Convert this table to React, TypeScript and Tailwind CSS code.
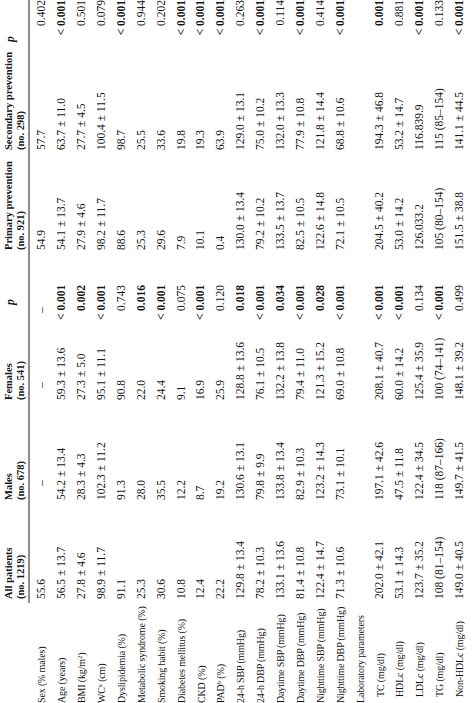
type Row = {
  label: React.ReactNode
  indent?: boolean
  cells?: string[]
}

const sup = (s: string) => <sup className="text-[7px] leading-none">{s}</sup>

const rows: Row[] = [
  { label: 'Sex (% males)', cells: ['55.6', '–', '–', '–', '54.9', '57.7', '0.402'] },
  { label: 'Age (years)', cells: ['56.5 ± 13.7', '54.2 ± 13.4', '59.3 ± 13.6', '< 0.001', '54.1 ± 13.7', '63.7 ± 11.0', '< 0.001'] },
  { label: <>BMI (kg/m{sup('2')})</>, cells: ['27.8 ± 4.6', '28.3 ± 4.3', '27.3 ± 5.0', '0.002', '27.9 ± 4.6', '27.7 ± 4.5', '0.501'] },
  { label: <>WC{sup('a')} (cm)</>, cells: ['98.9 ± 11.7', '102.3 ± 11.2', '95.1 ± 11.1', '< 0.001', '98.2 ± 11.7', '100.4 ± 11.5', '0.079'] },
  { label: 'Dyslipidemia (%)', cells: ['91.1', '91.3', '90.8', '0.743', '88.6', '98.7', '< 0.001'] },
  { label: 'Metabolic syndrome (%)', cells: ['25.3', '28.0', '22.0', '0.016', '25.3', '25.5', '0.944'] },
  { label: 'Smoking habit (%)', cells: ['30.6', '35.5', '24.4', '< 0.001', '29.6', '33.6', '0.202'] },
  { label: 'Diabetes mellitus (%)', cells: ['10.8', '12.2', '9.1', '0.075', '7.9', '19.8', '< 0.001'] },
  { label: 'CKD (%)', cells: ['12.4', '8.7', '16.9', '< 0.001', '10.1', '19.3', '< 0.001'] },
  { label: <>PAD{sup('b')} (%)</>, cells: ['22.2', '19.2', '25.9', '0.120', '0.4', '63.9', '< 0.001'] },
  { label: '24-h SBP (mmHg)', cells: ['129.8 ± 13.4', '130.6 ± 13.1', '128.8 ± 13.6', '0.018', '130.0 ± 13.4', '129.0 ± 13.1', '0.263'] },
  { label: '24-h DBP (mmHg)', cells: ['78.2 ± 10.3', '79.8 ± 9.9', '76.1 ± 10.5', '< 0.001', '79.2 ± 10.2', '75.0 ± 10.2', '< 0.001'] },
  { label: 'Daytime SBP (mmHg)', cells: ['133.1 ± 13.6', '133.8 ± 13.4', '132.2 ± 13.8', '0.034', '133.5 ± 13.7', '132.0 ± 13.3', '0.114'] },
  { label: 'Daytime DBP (mmHg)', cells: ['81.4 ± 10.8', '82.9 ± 10.3', '79.4 ± 11.0', '< 0.001', '82.5 ± 10.5', '77.9 ± 10.8', '< 0.001'] },
  { label: 'Nighttime SBP (mmHg)', cells: ['122.4 ± 14.7', '123.2 ± 14.3', '121.3 ± 15.2', '0.028', '122.6 ± 14.8', '121.8 ± 14.4', '0.414'] },
  { label: 'Nighttime DBP (mmHg)', cells: ['71.3 ± 10.6', '73.1 ± 10.1', '69.0 ± 10.8', '< 0.001', '72.1 ± 10.5', '68.8 ± 10.6', '< 0.001'] },
  { label: 'Laboratory parameters' },
  { label: 'TC (mg/dl)', indent: true, cells: ['202.0 ± 42.1', '197.1 ± 42.6', '208.1 ± 40.7', '< 0.001', '204.5 ± 40.2', '194.3 ± 46.8', '0.001'] },
  { label: 'HDLc (mg/dl)', indent: true, cells: ['53.1 ± 14.3', '47.5 ± 11.8', '60.0 ± 14.2', '< 0.001', '53.0 ± 14.2', '53.2 ± 14.7', '0.881'] },
  { label: 'LDLc (mg/dl)', indent: true, cells: ['123.7 ± 35.2', '122.4 ± 34.5', '125.4 ± 35.9', '0.134', '126.033.2', '116.839.9', '< 0.001'] },
  { label: 'TG (mg/dl)', indent: true, cells: ['108 (81–154)', '118 (87–166)', '100 (74–141)', '< 0.001', '105 (80–154)', '115 (85–154)', '0.133'] },
  { label: 'Non-HDLc (mg/dl)', indent: true, cells: ['149.0 ± 40.5', '149.7 ± 41.5', '148.1 ± 39.2', '0.499', '151.5 ± 38.8', '141.1 ± 44.5', '< 0.001'] },
]

// significant p values are set in bold
const isSig = (p: string) => p.startsWith('<') || (!isNaN(parseFloat(p)) && parseFloat(p) < 0.05)

const grid = 'grid grid-cols-[104px_99px_100px_80px_35px_35px_100px_108px_42px]'

function Head({ a, b }: { a: string; b: string }) {
  return (
    <div className="font-bold whitespace-nowrap text-[10.5px]">
      <div>{a}</div>
      <div>{b}</div>
    </div>
  )
}

function Val({ v, dash }: { v: string; dash: string }) {
  if (v === '–') return <div className={dash}>–</div>
  return <div>{v}</div>
}

function PCell({ v }: { v: string }) {
  if (v === '–') return <div className="pl-[7px]">–</div>
  return <div className={isSig(v) ? 'text-right whitespace-nowrap font-bold' : 'text-right whitespace-nowrap'}>{v}</div>
}

export default function App() {
  return (
    <div className="w-[474px] h-[703px] overflow-hidden bg-white">
      <div
        className="w-[703px] h-[474px] origin-top-left -rotate-90 translate-y-[703px] text-[#151515] text-[11.5px]"
        style={{ fontFamily: '"Liberation Serif", "Times New Roman", serif' }}
      >
        {/* header */}
        <div className="h-[30px] flex flex-col">
          <div className={`${grid} leading-[11.5px] pt-[3px] flex-1`}>
            <div />
            <Head a="All patients" b="(no. 1219)" />
            <Head a="Males" b="(no. 678)" />
            <Head a="Females" b="(no. 541)" />
            <div className="font-bold italic pl-[15px] pt-[2px]">p</div>
            <div />
            <Head a="Primary prevention" b="(no. 921)" />
            <Head a="Secondary prevention" b="(no. 298)" />
            <div className="font-bold italic pt-[2px]">p</div>
          </div>
          <div className="h-[2px] ml-[100px] bg-[#8c8c8c]" />
        </div>

        {/* body */}
        <div className="pt-[2px]">
          {rows.map((r, i) => (
            <div key={i} className={`${grid} h-[19.9px] items-center whitespace-nowrap`}>
              <div className={r.indent ? 'pl-[6px] text-[10px] tracking-[-0.15px]' : 'text-[10px] tracking-[-0.15px]'}>{r.label}</div>
              {r.cells ? (
                <>
                  <div>{r.cells[0]}</div>
                  <Val v={r.cells[1]} dash="pl-[14px]" />
                  <Val v={r.cells[2]} dash="pl-[12px]" />
                  <PCell v={r.cells[3]} />
                  <div />
                  <div>{r.cells[4]}</div>
                  <div>{r.cells[5]}</div>
                  <PCell v={r.cells[6]} />
                </>
              ) : null}
            </div>
          ))}
        </div>
      </div>
    </div>
  )
}
